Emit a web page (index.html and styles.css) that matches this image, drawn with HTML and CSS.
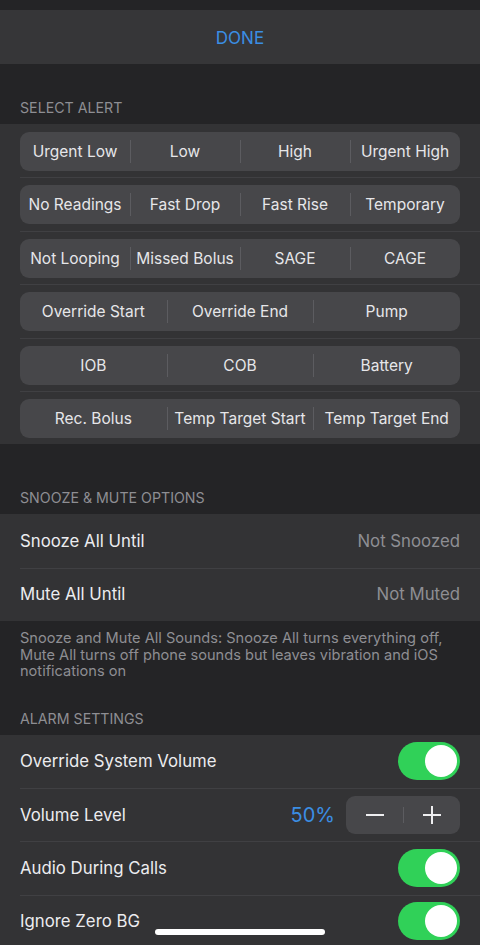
FILE: index.html
```html
<!DOCTYPE html>
<html lang="en">
<head>
  <meta charset="UTF-8">
  <title>Alarm Settings</title>
  <link rel="stylesheet" href="styles.css">
</head>
<body>
  <div class="top-strip"></div>
  <div class="done-bar">DONE</div>

  <div class="section-header first">SELECT ALERT</div>
  <div class="group">
    <div class="row seg-row">
      <div class="segmented">
        <span>Urgent Low</span><span>Low</span><span>High</span><span>Urgent High</span>
      </div>
    </div>
    <div class="row seg-row">
      <div class="segmented">
        <span>No Readings</span><span>Fast Drop</span><span>Fast Rise</span><span>Temporary</span>
      </div>
    </div>
    <div class="row seg-row">
      <div class="segmented">
        <span>Not Looping</span><span>Missed Bolus</span><span>SAGE</span><span>CAGE</span>
      </div>
    </div>
    <div class="row seg-row">
      <div class="segmented">
        <span>Override Start</span><span>Override End</span><span>Pump</span>
      </div>
    </div>
    <div class="row seg-row">
      <div class="segmented">
        <span>IOB</span><span>COB</span><span>Battery</span>
      </div>
    </div>
    <div class="row seg-row">
      <div class="segmented">
        <span>Rec. Bolus</span><span>Temp Target Start</span><span>Temp Target End</span>
      </div>
    </div>
  </div>

  <div class="section-header">SNOOZE &amp; MUTE OPTIONS</div>
  <div class="group">
    <div class="row">
      <span class="label">Snooze All Until</span>
      <span class="value">Not Snoozed</span>
    </div>
    <div class="row">
      <span class="label">Mute All Until</span>
      <span class="value">Not Muted</span>
    </div>
  </div>
  <p class="section-footer">Snooze and Mute All Sounds: Snooze All turns everything off, Mute All turns off phone sounds but leaves vibration and iOS notifications on</p>

  <div class="section-header alarm">ALARM SETTINGS</div>
  <div class="group">
    <div class="row">
      <span class="label">Override System Volume</span>
      <span class="toggle"></span>
    </div>
    <div class="row">
      <span class="label">Volume Level</span>
      <span class="percent">50%</span>
      <div class="stepper">
        <span class="minus"></span>
        <span class="plus"></span>
      </div>
    </div>
    <div class="row">
      <span class="label">Audio During Calls</span>
      <span class="toggle"></span>
    </div>
    <div class="row">
      <span class="label">Ignore Zero BG</span>
      <span class="toggle"></span>
    </div>
  </div>

  <div class="home-indicator"></div>
</body>
</html>
```

FILE: styles.css
```css
body {
  margin: 0;
  background-color: #242426;
  color: #ececef;
  font-family: Inter, 'Noto Sans', sans-serif;
  height: 945px;
  overflow: hidden;
  position: relative;
}
.top-strip {
  height: 10px;
}
.done-bar {
  height: 54px;
  background-color: #363638;
  color: #3b8ee4;
  font-size: 17px;
  padding-top: 1px;
  box-sizing: border-box;
  display: flex;
  align-items: center;
  justify-content: center;
}
.section-header {
  color: #8e8e93;
  font-size: 14.2px;
  line-height: 16px;
  padding: 46px 20px 8px;
}
.section-header.first {
  padding-top: 36px;
}
.section-header.alarm {
  padding-top: 31px;
}
.group {
  background-color: #333335;
}
.row {
  height: 53.4px;
  display: flex;
  align-items: center;
  padding: 0 20px;
  position: relative;
}
.row + .row::before {
  content: "";
  position: absolute;
  top: 0;
  left: 20px;
  right: 0;
  height: 1px;
  background-color: #404043;
}
.seg-row {
  align-items: flex-start;
  padding-top: 8px;
  box-sizing: border-box;
}
.segmented {
  flex: 1;
  height: 39px;
  background-color: #47474a;
  border-radius: 9px;
  display: flex;
  align-items: center;
}
.segmented span {
  flex: 1;
  text-align: center;
  font-size: 15.5px;
  color: #e6e6e9;
  position: relative;
  white-space: nowrap;
}
.segmented span + span::before {
  content: "";
  position: absolute;
  left: 0;
  top: -2px;
  bottom: -2px;
  width: 1px;
  background-color: #5c5c60;
}
.label {
  font-size: 16.8px;
  flex: 1;
}
.value {
  font-size: 16.8px;
  color: #8e8e93;
}
.section-footer {
  margin: 0;
  padding: 9px 20px 0;
  font-size: 14.6px;
  line-height: 16.5px;
  color: #8e8e93;
}
.toggle {
  width: 62px;
  height: 38px;
  border-radius: 19px;
  background-color: #30d158;
  position: relative;
}
.toggle::after {
  content: "";
  position: absolute;
  right: 3px;
  top: 3px;
  width: 32px;
  height: 32px;
  border-radius: 50%;
  background-color: #fff;
}
.percent {
  color: #3b8ee4;
  font-size: 20px;
  margin-right: 11px;
}
.stepper {
  width: 114px;
  height: 38px;
  background-color: #47474a;
  border-radius: 9px;
  display: flex;
  align-items: center;
  position: relative;
}
.stepper::before {
  content: "";
  position: absolute;
  left: 57px;
  top: 11px;
  width: 1px;
  height: 16px;
  background-color: #5c5c60;
}
.minus,
.plus {
  flex: 1;
  height: 18px;
  position: relative;
}
.minus::before,
.plus::before,
.plus::after {
  content: "";
  position: absolute;
  background-color: #eeeef0;
}
.minus::before,
.plus::before {
  left: 50%;
  top: 8px;
  width: 18px;
  height: 2px;
  margin-left: -9px;
}
.plus::after {
  left: 50%;
  top: 0;
  width: 2px;
  height: 18px;
  margin-left: -1px;
}
.home-indicator {
  position: absolute;
  left: 155px;
  top: 929px;
  width: 170px;
  height: 6px;
  border-radius: 3px;
  background-color: #fff;
}
```
